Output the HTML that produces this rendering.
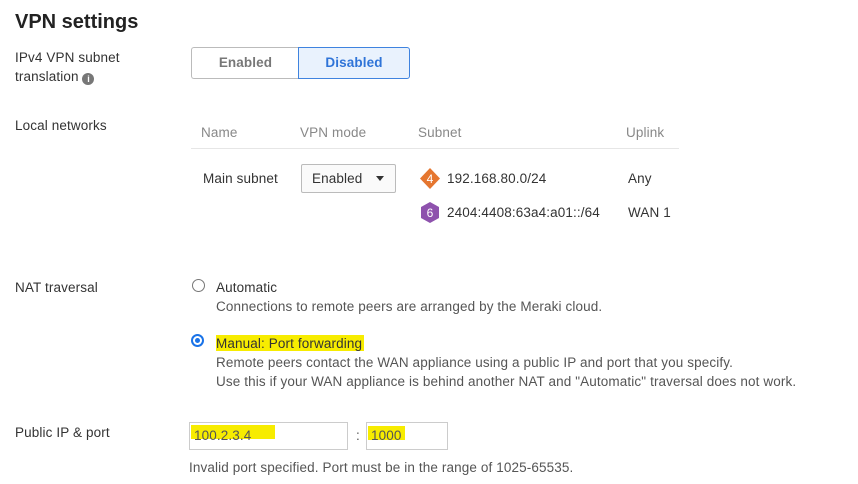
<!DOCTYPE html>
<html><head><style>
body{margin:0;width:858px;height:484px;background:#fff;font-family:"Liberation Sans",sans-serif;color:#333;font-size:13.5px;letter-spacing:0.12px;position:relative;overflow:hidden}
.a{position:absolute;white-space:nowrap}
.g{color:#555}
.h{color:#888}
.hl{background:#f7ec00;}
</style></head><body>
<div class="a" style="left:15px;top:11px;font-size:20px;font-weight:bold;color:#222;letter-spacing:0">VPN settings</div>
<div class="a" style="left:15px;top:48px;line-height:19px">IPv4 VPN subnet<br>translation <span style="display:inline-block;width:12px;height:12px;border-radius:50%;background:#777;color:#fff;font-size:9px;font-weight:bold;text-align:center;line-height:12px;vertical-align:-1px;letter-spacing:0">i</span></div>
<div class="a" style="left:191px;top:47px;width:107px;height:30px;border:1px solid #bbb;border-right:none;border-radius:3px 0 0 3px;text-align:center;line-height:30px;font-weight:bold;color:#777">Enabled</div>
<div class="a" style="left:298px;top:47px;width:110px;height:30px;border:1px solid #3f83df;border-radius:0 3px 3px 0;background:#e9f2fd;text-align:center;line-height:30px;font-weight:bold;color:#2f74d8">Disabled</div>

<div class="a" style="left:15px;top:118px">Local networks</div>
<div class="a h" style="left:201px;top:125px">Name</div>
<div class="a h" style="left:300px;top:125px">VPN mode</div>
<div class="a h" style="left:418px;top:125px">Subnet</div>
<div class="a h" style="left:626px;top:125px">Uplink</div>
<div class="a" style="left:191px;top:148px;width:488px;height:1px;background:#e6e6e6"></div>
<div class="a" style="left:203px;top:171px">Main subnet</div>
<div class="a" style="left:301px;top:164px;width:93px;height:27px;border:1px solid #bbb;border-radius:2px;background:#fafafa"></div>
<div class="a" style="left:312px;top:171px">Enabled</div>
<div class="a" style="left:376px;top:176px;width:0;height:0;border-left:4px solid transparent;border-right:4px solid transparent;border-top:5px solid #333"></div>
<svg class="a" style="left:419px;top:168px" width="22" height="21"><polygon points="11,0 21,10.5 11,21 1,10.5" fill="#e5762f"/><text x="11" y="15" fill="#fff" font-size="12" text-anchor="middle" font-family="Liberation Sans">4</text></svg>
<div class="a" style="left:447px;top:171px">192.168.80.0/24</div>
<div class="a" style="left:628px;top:171px">Any</div>
<svg class="a" style="left:420px;top:202px" width="20" height="22"><polygon points="10,0 19,5 19,16 10,21 1,16 1,5" fill="#8e52ad"/><text x="10" y="15" fill="#fff" font-size="12" text-anchor="middle" font-family="Liberation Sans">6</text></svg>
<div class="a" style="left:447px;top:205px">2404:4408:63a4:a01::/64</div>
<div class="a" style="left:628px;top:205px">WAN 1</div>

<div class="a" style="left:15px;top:280px">NAT traversal</div>
<div class="a" style="left:192px;top:279px;width:11px;height:11px;border:1px solid #777;border-radius:50%"></div>
<div class="a" style="left:216px;top:280px">Automatic</div>
<div class="a g" style="left:216px;top:299px">Connections to remote peers are arranged by the Meraki cloud.</div>
<div class="a" style="left:191px;top:334px;width:9px;height:9px;border:2px solid #1a73e8;border-radius:50%;background:#fff"></div>
<div class="a" style="left:195px;top:338px;width:5px;height:5px;border-radius:50%;background:#1a73e8"></div>
<div class="a" style="left:216px;top:336px"><span class="hl" style="padding:1px 2px 0 0">Manual: Port forwarding</span></div>
<div class="a g" style="left:216px;top:355px">Remote peers contact the WAN appliance using a public IP and port that you specify.</div>
<div class="a g" style="left:216px;top:374px">Use this if your WAN appliance is behind another NAT and "Automatic" traversal does not work.</div>

<div class="a" style="left:15px;top:425px">Public IP &amp; port</div>
<div class="a" style="left:189px;top:422px;width:157px;height:26px;border:1px solid #ccc"></div>
<div class="a hl" style="left:191px;top:425px;width:84px;height:14px"></div>
<div class="a g" style="left:194px;top:428px">100.2.3.4</div>
<div class="a g" style="left:356px;top:428px">:</div>
<div class="a" style="left:366px;top:422px;width:80px;height:26px;border:1px solid #ccc"></div>
<div class="a hl" style="left:368px;top:426px;width:37px;height:14px"></div>
<div class="a g" style="left:371px;top:428px">1000</div>
<div class="a g" style="left:189px;top:460px">Invalid port specified. Port must be in the range of 1025-65535.</div>
</body></html>
